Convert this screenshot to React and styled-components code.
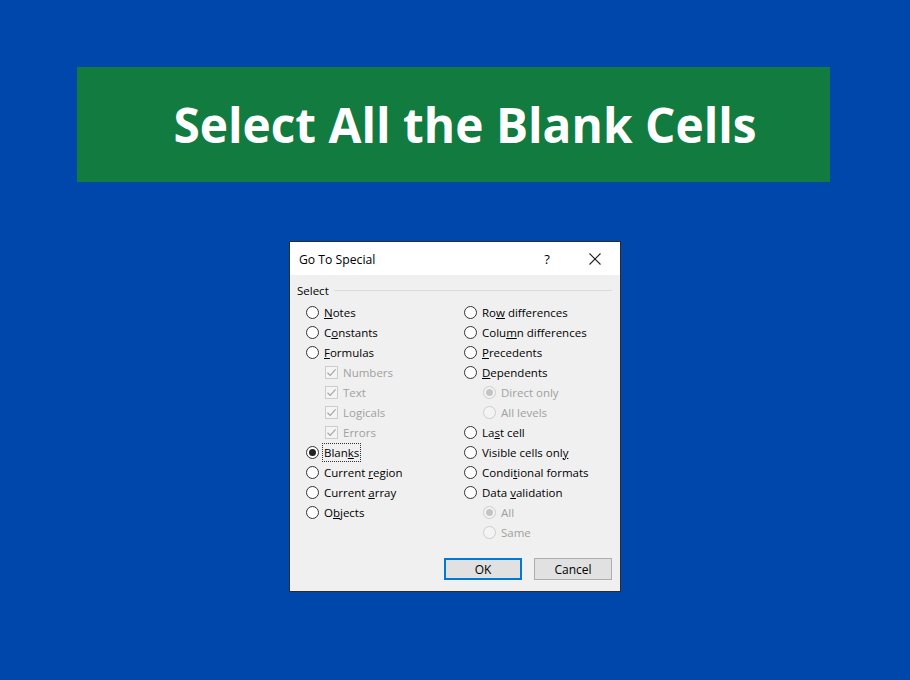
import React from 'react'
import styled, { createGlobalStyle, css } from 'styled-components'

const GlobalStyle = createGlobalStyle`
  html, body { margin: 0; padding: 0; }
  body { background: #0047ab; font-family: "Open Sans", "Noto Sans", sans-serif; }
`

const leftItems = [
  { label: '&Notes' },
  { label: 'C&onstants' },
  { label: '&Formulas' },
  { label: 'Numbers', kind: 'check', disabled: true },
  { label: 'Text', kind: 'check', disabled: true },
  { label: 'Logicals', kind: 'check', disabled: true },
  { label: 'Errors', kind: 'check', disabled: true },
  { label: 'Blan&ks', checked: true, focus: true },
  { label: 'Current &region' },
  { label: 'Current &array' },
  { label: 'O&bjects' },
]

const rightItems = [
  { label: 'Ro&w differences' },
  { label: 'Colu&mn differences' },
  { label: '&Precedents' },
  { label: '&Dependents' },
  { label: 'Direct only', sub: true, disabled: true, checked: true },
  { label: 'All levels', sub: true, disabled: true },
  { label: 'La&st cell' },
  { label: 'Visible cells onl&y' },
  { label: 'Condi&tional formats' },
  { label: 'Data &validation' },
  { label: 'All', sub: true, disabled: true, checked: true },
  { label: 'Same', sub: true, disabled: true },
]

function Label({ text }) {
  const i = text.indexOf('&')
  if (i < 0) return text
  return (
    <>
      {text.slice(0, i)}
      <u>{text[i + 1]}</u>
      {text.slice(i + 2)}
    </>
  )
}

function Option({ item }) {
  return (
    <Row $sub={item.sub || item.kind === 'check'} $disabled={item.disabled}>
      {item.kind === 'check' ? (
        <CheckBox>
          <svg width="11" height="11" viewBox="0 0 11 11">
            <path d="M1.5 5.8 L4.2 8.4 L9.6 2.4" fill="none" stroke="#a6a6a6" strokeWidth="1.2" />
          </svg>
        </CheckBox>
      ) : (
        <Radio $checked={item.checked} $disabled={item.disabled} />
      )}
      <Text $focus={item.focus}>
        <Label text={item.label} />
      </Text>
    </Row>
  )
}

export default function App() {
  return (
    <>
      <GlobalStyle />
      <Page>
        <Banner>
          <Title>Select All the Blank Cells</Title>
        </Banner>
        <Dialog>
          <TitleBar>
            <DialogTitle>Go To Special</DialogTitle>
            <HelpButton>?</HelpButton>
            <CloseButton>
              <svg width="12" height="12" viewBox="0 0 12 12">
                <path d="M0.5 0.5 L11.5 11.5 M11.5 0.5 L0.5 11.5" stroke="#222" strokeWidth="1.1" />
              </svg>
            </CloseButton>
          </TitleBar>
          <Body>
            <GroupLabel>
              <span>Select</span>
              <Line />
            </GroupLabel>
            <Columns>
              <Column>
                {leftItems.map((it) => <Option key={it.label} item={it} />)}
              </Column>
              <Column>
                {rightItems.map((it) => <Option key={it.label} item={it} />)}
              </Column>
            </Columns>
            <Buttons>
              <Button $default>OK</Button>
              <Button>Cancel</Button>
            </Buttons>
          </Body>
        </Dialog>
      </Page>
    </>
  )
}

const Page = styled.main`
  min-height: 680px;
  box-sizing: border-box;
  padding: 67px 0 0 77px;
  background: #0047ab;
`

const Banner = styled.div`
  width: 753px;
  height: 115px;
  background: #117b40;
  display: flex;
  align-items: center;
  justify-content: center;
  padding-left: 23px;
  box-sizing: border-box;
`

const Title = styled.h1`
  margin: 0;
  color: #fff;
  font-family: "Open Sans", sans-serif;
  font-weight: 700;
  font-size: 47.8px;
`

const Dialog = styled.div`
  margin: 59px 0 0 212px;
  width: 332px;
  box-sizing: border-box;
  border: 1px solid #2b2b2b;
  background: #f0f0f0;
  font-family: "Open Sans", "Noto Sans", sans-serif;
  font-size: 11.5px;
  color: #000;
`

const TitleBar = styled.div`
  height: 33px;
  background: #fff;
  display: flex;
  align-items: center;
`

const DialogTitle = styled.div`
  flex: 1;
  padding-left: 9px;
  font-size: 12.2px;
  padding-top: 1px;
`

const HelpButton = styled.div`
  width: 30px;
  text-align: center;
  font-size: 13px;
  margin-right: 10px;
`

const CloseButton = styled.div`
  width: 46px;
  height: 33px;
  display: flex;
  align-items: center;
  justify-content: center;
  margin-right: 2px;
`

const Body = styled.div`
  padding: 7px 8px 11px 7px;
`

const GroupLabel = styled.div`
  display: flex;
  align-items: center;
  gap: 4px;
  height: 16px;
  margin-bottom: 4px;
`

const Line = styled.div`
  flex: 1;
  height: 1px;
  background: #dcdcdc;
  margin-left: 1px;
`

const Columns = styled.div`
  display: grid;
  grid-template-columns: 158px 1fr;
  padding-left: 9px;
`

const Column = styled.div`
  display: flex;
  flex-direction: column;
`

const Row = styled.div`
  height: 20px;
  display: flex;
  align-items: center;
  gap: 5px;
  padding-left: ${(p) => (p.$sub ? '19px' : '0')};
  color: ${(p) => (p.$disabled ? '#a0a0a0' : '#000')};
`

const Radio = styled.span`
  width: 13px;
  height: 13px;
  box-sizing: border-box;
  border-radius: 50%;
  border: 1px solid ${(p) => (p.$disabled ? '#cccccc' : '#333')};
  background: ${(p) => (p.$disabled ? '#f4f4f4' : '#fff')};
  position: relative;
  flex: none;
  ${(p) =>
    p.$checked &&
    css`
      &::after {
        content: '';
        position: absolute;
        left: 2px;
        top: 2px;
        width: 7px;
        height: 7px;
        border-radius: 50%;
        background: ${p.$disabled ? '#c4c4c4' : '#222'};
      }
    `}
`

const CheckBox = styled.span`
  width: 13px;
  height: 13px;
  box-sizing: border-box;
  border: 1px solid #cccccc;
  background: #f4f4f4;
  display: flex;
  align-items: center;
  justify-content: center;
  flex: none;
`

const Text = styled.span`
  line-height: 16px;
  padding: 1px 1px 0;
  border: 1px dotted ${(p) => (p.$focus ? '#333' : 'transparent')};
  margin-left: -2px;
  white-space: nowrap;
`

const Buttons = styled.div`
  display: flex;
  justify-content: flex-end;
  gap: 12px;
  margin-top: 16px;
`

const Button = styled.div`
  width: 78px;
  height: 22px;
  box-sizing: border-box;
  background: #e1e1e1;
  border: ${(p) => (p.$default ? '2px solid #0078d7' : '1px solid #adadad')};
  display: flex;
  align-items: center;
  justify-content: center;
  font-size: 12px;
`
